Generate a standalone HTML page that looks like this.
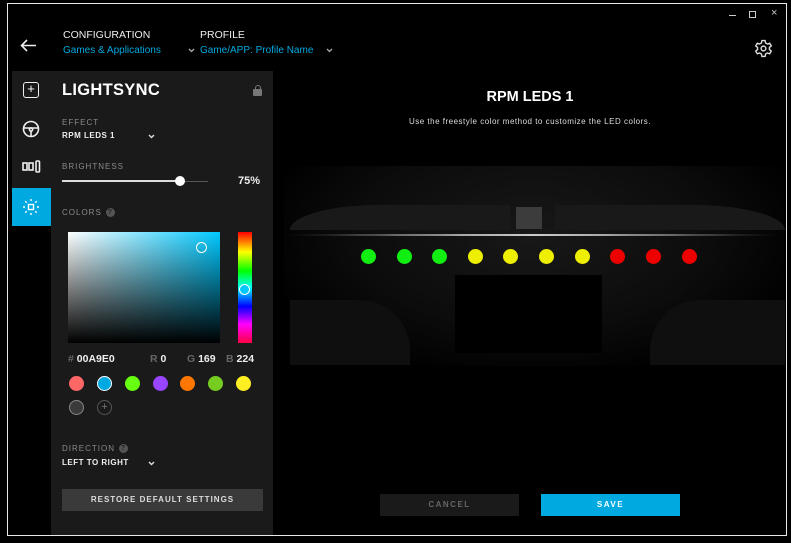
<!DOCTYPE html>
<html><head><style>
*{margin:0;padding:0;box-sizing:border-box}
body{width:791px;height:543px;background:#000;position:relative;overflow:hidden;font-family:"Liberation Sans",sans-serif;color:#fff}
.a{position:absolute}
.frame{left:7px;top:3px;width:780px;height:533px;border:1px solid #e8e8e8}
.lbl{font-size:8px;letter-spacing:1px;color:#8a8a8a}
.val{font-size:8px;font-weight:bold;letter-spacing:.5px;color:#eee}
.sw{width:15px;height:15px;border-radius:50%;position:absolute;top:376px}
.led{width:15px;height:15px;border-radius:50%;position:absolute;top:249px}
.q{display:inline-block;width:9px;height:9px;border-radius:50%;background:#555;color:#222;font-size:7px;text-align:center;line-height:9px;font-weight:bold;vertical-align:middle;margin-left:4px}
.chev{position:absolute}
</style></head><body>
<div class="a frame"></div>
<div class="a" style="left:729px;top:15px;width:7px;height:1px;background:#ccc"></div>
<div class="a" style="left:749px;top:11px;width:7px;height:7px;border:1.5px solid #ccc"></div>
<div class="a" style="left:771px;top:7px;font-size:11px;color:#ccc">×</div>
<svg class="a" style="left:754px;top:39px" width="19" height="19" viewBox="0 0 24 24" fill="none" stroke="#ddd" stroke-width="1.8"><circle cx="12" cy="12" r="3"/><path d="M10 2h4l.6 3 2.3 1.3 2.9-1 2 3.4-2.3 2v2.6l2.3 2-2 3.4-2.9-1-2.3 1.3-.6 3h-4l-.6-3-2.3-1.3-2.9 1-2-3.4 2.3-2v-2.6l-2.3-2 2-3.4 2.9 1 2.3-1.3z"/></svg>
<svg class="a" style="left:20px;top:39px" width="17" height="13" viewBox="0 0 17 13" fill="none" stroke="#eee" stroke-width="1.6"><path d="M16 6.5H2M7 1L1.5 6.5 7 12"/></svg>
<div class="a" style="left:63px;top:29px;font-size:10.5px;color:#eee">CONFIGURATION</div>
<div class="a" style="left:63px;top:45px;font-size:10px;color:#00a9e0">Games &amp; Applications</div>
<svg class="chev" style="left:188px;top:48px" width="7" height="5" viewBox="0 0 7 5" fill="none" stroke="#aaa" stroke-width="1.3"><path d="M1 1l2.5 2.5L6 1"/></svg>
<div class="a" style="left:200px;top:29px;font-size:10.5px;color:#eee">PROFILE</div>
<div class="a" style="left:200px;top:45px;font-size:10px;color:#00a9e0">Game/APP: Profile Name</div>
<svg class="chev" style="left:326px;top:48px" width="7" height="5" viewBox="0 0 7 5" fill="none" stroke="#aaa" stroke-width="1.3"><path d="M1 1l2.5 2.5L6 1"/></svg>
<div class="a" style="left:12px;top:71px;width:39px;height:117px;background:#1a1a1a"></div>
<div class="a" style="left:12px;top:188px;width:39px;height:38px;background:#00a9e0"></div>
<div class="a" style="left:23px;top:82px;width:16px;height:16px;border:1.5px solid #eee;border-radius:3px;text-align:center;font-size:13px;line-height:12px">+</div>
<svg class="a" style="left:22px;top:120px" width="18" height="18" viewBox="0 0 18 18" fill="none" stroke="#eee" stroke-width="1.6"><circle cx="9" cy="9" r="7.5"/><path d="M1.8 8h14.4M9 11v5.5"/><circle cx="9" cy="9.5" r="1.6"/></svg>
<svg class="a" style="left:22px;top:160px" width="19" height="14" viewBox="0 0 19 14" fill="none" stroke="#eee" stroke-width="1.6"><rect x="1" y="3" width="4" height="7"/><rect x="7" y="3" width="4" height="7"/><rect x="14" y="1" width="3.5" height="11" rx="1"/></svg>
<svg class="a" style="left:22px;top:198px" width="18" height="18" viewBox="0 0 18 18" fill="none" stroke="#fff" stroke-width="1.4"><rect x="6.5" y="6.5" width="5" height="5"/><path d="M9 1v2M9 15v2M1 9h2M15 9h2M3.3 3.3l1.4 1.4M13.3 13.3l1.4 1.4M3.3 14.7l1.4-1.4M13.3 4.7l1.4-1.4"/></svg>
<div class="a" style="left:51px;top:71px;width:222px;height:464px;background:#1a1a1a"></div>
<div class="a" style="left:62px;top:81px;font-size:16.5px;font-weight:bold;letter-spacing:.3px">LIGHTSYNC</div>
<div class="a" style="left:253px;top:89px;width:9px;height:7px;background:#777;border-radius:1px"></div>
<div class="a" style="left:255px;top:85px;width:6px;height:6px;border:1.5px solid #777;border-bottom:none;border-radius:3px 3px 0 0"></div>
<div class="a lbl" style="left:62px;top:118px">EFFECT</div>
<div class="a val" style="left:62px;top:131px">RPM LEDS 1</div>
<svg class="chev" style="left:148px;top:134px" width="7" height="5" viewBox="0 0 7 5" fill="none" stroke="#ddd" stroke-width="1.4"><path d="M1 1l2.5 2.5L6 1"/></svg>
<div class="a lbl" style="left:62px;top:162px">BRIGHTNESS</div>
<div class="a" style="left:62px;top:181px;width:146px;height:1px;background:#555"></div>
<div class="a" style="left:62px;top:180px;width:118px;height:2px;background:#ddd"></div>
<div class="a" style="left:175px;top:176px;width:10px;height:10px;border-radius:50%;background:#fff"></div>
<div class="a" style="left:238px;top:175px;font-size:11px;font-weight:bold;color:#eee">75%</div>
<div class="a lbl" style="left:62px;top:208px">COLORS<span class="q">?</span></div>
<div class="a" style="left:68px;top:232px;width:152px;height:111px;background:linear-gradient(to bottom,transparent,#000),linear-gradient(to right,#fff,#00c8ff)"></div>
<div class="a" style="left:196px;top:242px;width:11px;height:11px;border-radius:50%;border:1.5px solid #fff"></div>
<div class="a" style="left:238px;top:232px;width:14px;height:111px;background:linear-gradient(#f00,#ff0 18%,#0f0 35%,#0ff 50%,#00f 67%,#f0f 83%,#f04)"></div>
<div class="a" style="left:239px;top:284px;width:11px;height:11px;border-radius:50%;border:1.5px solid #fff;background:#00c8ff"></div>
<div class="a" style="left:68px;top:353px;font-size:10.5px;font-weight:bold;color:#eee"><span style="color:#666">#</span> 00A9E0</div>
<div class="a" style="left:150px;top:353px;font-size:10.5px;font-weight:bold;color:#eee"><span style="color:#666">R</span> 0</div>
<div class="a" style="left:187px;top:353px;font-size:10.5px;font-weight:bold;color:#eee"><span style="color:#666">G</span> 169</div>
<div class="a" style="left:226px;top:353px;font-size:10.5px;font-weight:bold;color:#eee"><span style="color:#666">B</span> 224</div>
<div class="sw" style="left:69px;background:#f66"></div>
<div class="sw" style="left:97px;background:#00a9e0;border:1.5px solid #fff"></div>
<div class="sw" style="left:125px;background:#6f1"></div>
<div class="sw" style="left:153px;background:#94f"></div>
<div class="sw" style="left:180px;background:#f70"></div>
<div class="sw" style="left:208px;background:#7c2"></div>
<div class="sw" style="left:236px;background:#fe2"></div>
<div class="sw" style="left:69px;top:400px;background:#3a3a3a;border:1px solid #888"></div>
<div class="sw" style="left:97px;top:400px;border:1px solid #555;color:#777;font-size:11px;text-align:center;line-height:12px">+</div>
<div class="a lbl" style="left:62px;top:444px">DIRECTION<span class="q">?</span></div>
<div class="a val" style="left:62px;top:458px">LEFT TO RIGHT</div>
<svg class="chev" style="left:148px;top:461px" width="7" height="5" viewBox="0 0 7 5" fill="none" stroke="#ddd" stroke-width="1.4"><path d="M1 1l2.5 2.5L6 1"/></svg>
<div class="a" style="left:62px;top:489px;width:201px;height:22px;background:#3a3a3a;font-size:8px;font-weight:bold;letter-spacing:1px;text-align:center;line-height:22px;color:#ddd">RESTORE DEFAULT SETTINGS</div>
<div class="a" style="left:274px;top:89px;width:512px;text-align:center;font-size:14.5px;font-weight:bold">RPM LEDS 1</div>
<div class="a" style="left:274px;top:117px;width:512px;text-align:center;font-size:8px;letter-spacing:.5px;color:#ddd">Use the freestyle color method to customize the LED colors.</div>
<div class="a" style="left:284px;top:166px;width:500px;height:200px;background:radial-gradient(ellipse at 50% 35%,#181818 0%,#0c0c0c 50%,#000 80%)"></div>
<div class="a" style="left:290px;top:205px;width:220px;height:25px;background:#191919;border-radius:40% 0 0 0/100% 0 0 0"></div>
<div class="a" style="left:555px;top:205px;width:230px;height:25px;background:#191919;border-radius:0 40% 0 0/0 100% 0 0"></div>
<div class="a" style="left:516px;top:207px;width:26px;height:22px;background:#3c3c3c"></div>
<div class="a" style="left:284px;top:234px;width:500px;height:2px;background:linear-gradient(to right,transparent,#999 30%,#ccc 50%,#999 70%,transparent);border-radius:50%"></div>
<div class="a" style="left:455px;top:275px;width:147px;height:78px;background:#000"></div>
<div class="a" style="left:290px;top:300px;width:120px;height:65px;background:#0f0f0f;border-radius:0 50px 0 0"></div>
<div class="a" style="left:650px;top:300px;width:135px;height:65px;background:#0f0f0f;border-radius:50px 0 0 0"></div>
<div class="led" style="left:361px;background:#1e1"></div>
<div class="led" style="left:397px;background:#1e1"></div>
<div class="led" style="left:432px;background:#1e1"></div>
<div class="led" style="left:468px;background:#ee0"></div>
<div class="led" style="left:503px;background:#ee0"></div>
<div class="led" style="left:539px;background:#ee0"></div>
<div class="led" style="left:575px;background:#ee0"></div>
<div class="led" style="left:610px;background:#e00"></div>
<div class="led" style="left:646px;background:#e00"></div>
<div class="led" style="left:682px;background:#e00"></div>
<div class="a" style="left:380px;top:494px;width:139px;height:22px;background:#1a1a1a;font-size:8px;font-weight:bold;letter-spacing:1.5px;text-align:center;line-height:22px;color:#666">CANCEL</div>
<div class="a" style="left:541px;top:494px;width:139px;height:22px;background:#00a9e0;font-size:8px;font-weight:bold;letter-spacing:1.5px;text-align:center;line-height:22px;color:#fff">SAVE</div>
</body></html>
